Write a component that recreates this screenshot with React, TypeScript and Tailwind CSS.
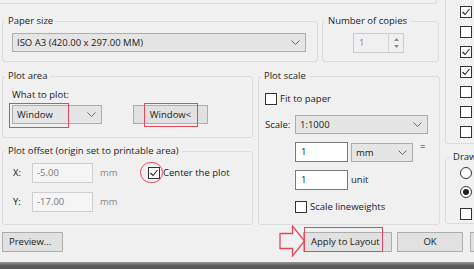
import React from "react";

function Check({ checked = false }: { checked?: boolean }) {
  return (
    <span className="inline-flex w-[12px] h-[12px] border border-[#333333] bg-white shrink-0 items-center justify-center">
      {checked && (
        <svg width="10" height="10" viewBox="0 0 10 10">
          <polyline points="1.5,5 4,7.5 8.5,2" fill="none" stroke="#222222" strokeWidth="1.1" />
        </svg>
      )}
    </span>
  );
}

function Radio({ checked = false }: { checked?: boolean }) {
  return (
    <span className="inline-flex w-[12px] h-[12px] rounded-full border border-[#333333] bg-white shrink-0 items-center justify-center">
      {checked && <span className="w-[6px] h-[6px] rounded-full bg-[#222222]" />}
    </span>
  );
}

function Chevron() {
  return (
    <svg width="9" height="5" viewBox="0 0 9 5" className="shrink-0">
      <path d="M0.5 0.5 L4.5 4.5 L8.5 0.5" fill="none" stroke="#6a6a6a" strokeWidth="1" />
    </svg>
  );
}

function Dropdown({ text, className = "" }: { text: string; className?: string }) {
  return (
    <div
      className={`h-[19px] border border-[#adadad] bg-[#e5e5e5] flex items-center justify-between pl-[4px] pr-[5px] shrink-0 ${className}`}
    >
      <span>{text}</span>
      <Chevron />
    </div>
  );
}

function Group({
  label,
  className = "",
  children,
}: {
  label: string;
  className?: string;
  children?: React.ReactNode;
}) {
  return (
    <fieldset className={`border border-[#dcdcdc] rounded-[3px] shrink-0 ${className}`}>
      <legend className="ml-[2px] px-[3px] leading-[14px] text-[#1e1e1e]">{label}</legend>
      {children}
    </fieldset>
  );
}

function TextBox({ text, disabled = false }: { text: string; disabled?: boolean }) {
  return disabled ? (
    <div className="w-[61px] h-[20px] border border-[#cfcfcf] bg-[#f5f5f5] text-[#7a7a7a] flex items-center pl-[4px] shrink-0">
      {text}
    </div>
  ) : (
    <div className="w-[53px] h-[20px] border border-[#7a7a7a] bg-white flex items-center pl-[5px] shrink-0">
      {text}
    </div>
  );
}

export default function App() {
  return (
    <div className="w-[474px] h-[269px] bg-[#f0f0f0] overflow-hidden flex flex-col text-[9.5px] leading-[14px] text-[#1a1a1a] font-['Open_Sans',sans-serif]">
      <div className="flex h-[225px] shrink-0">
        {/* left column */}
        <div className="w-[445px] flex flex-col shrink-0">
          <div className="w-[437px] h-[4px] border-b border-r border-[#dcdcdc] rounded-br-[3px] shrink-0" />
          <div className="flex mt-[10px] ml-[2px]">
            <Group label="Paper size" className="w-[316px] h-[48px]">
              <Dropdown text="ISO A3 (420.00 x 297.00 MM)" className="w-[294px] mt-[5px] ml-[9px]" />
            </Group>
            <Group label="Number of copies" className="w-[117px] h-[48px] ml-[4px]">
              <div className="w-[51px] h-[20px] mt-[5px] ml-[30px] border border-[#cccccc] bg-[#f0f0f0] flex">
                <span className="flex-1 pl-[5px] flex items-center text-[#8a8a8a]">1</span>
                <span className="w-[15px] border-l border-[#d4d4d4] flex flex-col items-center justify-center gap-[4px]">
                  <svg width="5" height="3" viewBox="0 0 5 3">
                    <path d="M0 3 L2.5 0 L5 3 Z" fill="#8a8a8a" />
                  </svg>
                  <svg width="5" height="3" viewBox="0 0 5 3">
                    <path d="M0 0 L2.5 3 L5 0 Z" fill="#8a8a8a" />
                  </svg>
                </span>
              </div>
            </Group>
          </div>
          <div className="flex mt-[7px] ml-[2px]">
            <div className="w-[251px] flex flex-col shrink-0">
              <Group label="Plot area" className="w-[251px] h-[69px]">
                <div className="ml-[9px] mt-[5px]">What to plot:</div>
                <div className="flex ml-[9px] mt-[3px]">
                  <div className="relative">
                    <Dropdown text="Window" className="w-[90px]" />
                    <div className="absolute left-[-3px] top-[-2px] w-[60px] h-[25px] border-[1.5px] border-[#e5485c]" />
                  </div>
                  <div className="relative ml-[31px]">
                    <div className="w-[75px] h-[19px] border border-[#adadad] bg-[#e1e1e1] flex items-center justify-center">
                      Window&lt;
                    </div>
                    <div className="absolute left-[11px] top-[-2px] w-[54px] h-[24px] border-[1.5px] border-[#e5485c]" />
                  </div>
                </div>
              </Group>
              <Group label="Plot offset (origin set to printable area)" className="w-[251px] h-[81px] mt-[6px]">
                <div className="flex items-center mt-[5px] h-[20px]">
                  <span className="ml-[10px] w-[19px]">X:</span>
                  <TextBox text="-5.00" disabled />
                  <span className="ml-[7px] w-[48px] text-[#8a8a8a]">mm</span>
                  <span className="relative flex">
                    <Check checked />
                    <span className="absolute left-[-8px] top-[-5px] w-[23px] h-[21px] rounded-full border-[1.5px] border-[#e5485c]" />
                  </span>
                  <span className="ml-[3px]">Center the plot</span>
                </div>
                <div className="flex items-center mt-[9px] h-[20px]">
                  <span className="ml-[10px] w-[19px]">Y:</span>
                  <TextBox text="-17.00" disabled />
                  <span className="ml-[7px] text-[#8a8a8a]">mm</span>
                </div>
              </Group>
            </div>
            <Group label="Plot scale" className="w-[182px] h-[156px] ml-[5px]">
              <div className="flex items-center mt-[9px] ml-[6px]">
                <Check />
                <span className="ml-[3px]">Fit to paper</span>
              </div>
              <div className="flex items-center mt-[9px] ml-[6px]">
                <span className="w-[30px]">Scale:</span>
                <Dropdown text="1:1000" className="w-[133px]" />
              </div>
              <div className="flex items-start mt-[8px] ml-[36px]">
                <TextBox text="1" />
                <Dropdown text="mm" className="w-[62px] ml-[3px] mt-[1px]" />
                <span className="ml-[7px] leading-[10px]">=</span>
              </div>
              <div className="flex items-center mt-[8px] ml-[36px]">
                <TextBox text="1" />
                <span className="ml-[3px]">unit</span>
              </div>
              <div className="flex items-center mt-[10px] ml-[36px]">
                <Check />
                <span className="ml-[3px]">Scale lineweights</span>
              </div>
            </Group>
          </div>
        </div>
        {/* right column */}
        <div className="flex flex-col w-[29px] shrink-0">
          <div className="h-[144px] w-[40px] border-l border-b border-[#dcdcdc] rounded-bl-[3px] pl-[14px] pt-[6px] flex flex-col gap-[8px] shrink-0">
            <Check checked />
            <Check />
            <Check checked />
            <Check checked />
            <Check />
            <Check />
            <Check />
          </div>
          <fieldset className="border border-[#dcdcdc] rounded-[3px] w-[40px] h-[74px] mt-[6px] shrink-0">
            <legend className="ml-[4px] px-[3px] leading-[14px] text-[#1e1e1e]">Draw</legend>
            <div className="flex flex-col ml-[14px] mt-[3px]">
              <Radio />
              <div className="mt-[6px]">
                <Radio checked />
              </div>
              <div className="mt-[9px]">
                <Check />
              </div>
            </div>
          </fieldset>
        </div>
      </div>
      {/* buttons */}
      <div className="flex mt-[7px] h-[20px] shrink-0">
        <div className="ml-[2px] w-[61px] h-[20px] border border-[#adadad] bg-[#e1e1e1] flex items-center pl-[6px] shrink-0">
          Preview...
        </div>
        <div className="relative ml-[240px] shrink-0">
          <div className="w-[89px] h-[20px] border border-[#adadad] bg-[#e1e1e1] flex items-center pl-[7px]">
            Apply to Layout
          </div>
          <div className="absolute left-[1px] top-[-5px] w-[79px] h-[25px] border-[1.5px] border-[#e5485c]" />
          <svg
            className="absolute left-[-24px] top-[-7px]"
            width="27"
            height="32"
            viewBox="0 0 27 32"
          >
            <polygon
              points="1,8.5 13.5,8.5 13.5,1 25.5,16 13.5,31 13.5,23.5 1,23.5"
              fill="none"
              stroke="#e5485c"
              strokeWidth="1.3"
            />
          </svg>
        </div>
        <div className="ml-[5px] w-[66px] h-[20px] border border-[#adadad] bg-[#e1e1e1] flex items-center justify-center shrink-0">
          OK
        </div>
        <div className="ml-[7px] w-[66px] h-[20px] border border-[#adadad] bg-[#e1e1e1] shrink-0" />
      </div>
      <div className="flex-1" />
      <div className="h-[7px] shrink-0 bg-gradient-to-b from-[#9a9a9a] via-[#5e5e5e] to-[#575757]" />
    </div>
  );
}
